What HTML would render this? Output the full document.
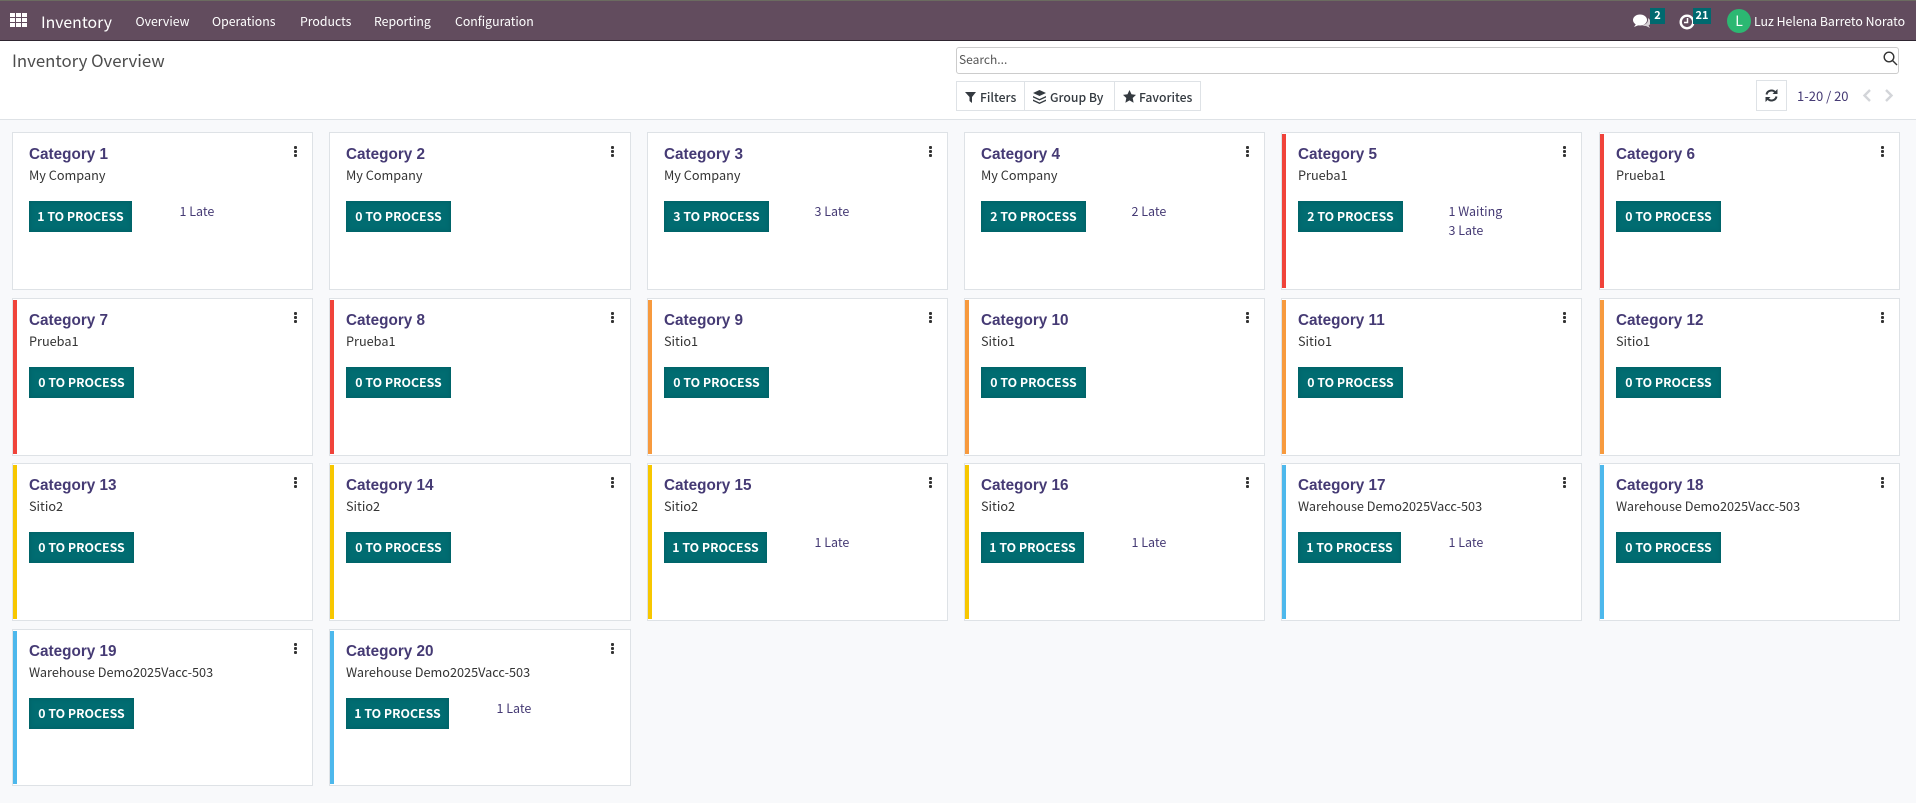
<!DOCTYPE html>
<html><head><meta charset="utf-8"><style>
*{box-sizing:border-box}
html,body{margin:0;padding:0}
body{width:1916px;height:803px;overflow:hidden;background:#f8f9fb;position:relative;font-family:"Noto Sans CJK SC","Liberation Sans",sans-serif;color:#333}
.a{position:absolute;white-space:nowrap}
#nav{left:0;top:0;width:1916px;height:41px;background:#624c5e;border-top:1px solid #6b6b60;border-bottom:1px solid #2e2530}
.n{top:11px;font-size:12.300px;line-height:20px;color:#fff}
#cp{left:0;top:41px;width:1916px;height:79px;background:#fff;border-bottom:1px solid #dee2e6}
.f{top:81px;height:30px;border:1px solid #dee2e6;background:#fff;font-size:12.200px;line-height:30px;color:#343a40;font-weight:500}
.c{width:301px;height:158px;background:#fff;border:1px solid #dee2e6}
.s{position:absolute;left:0;top:1px;bottom:1px;width:4px}
.t{position:absolute;left:16px;top:11px;font-family:"Liberation Sans",sans-serif;font-size:15.300px;line-height:22px;font-weight:700;color:#453a74;white-space:nowrap}
.u{position:absolute;left:16px;top:33px;font-size:12.700px;line-height:18px;color:#333;white-space:nowrap}
.b{position:absolute;left:16px;top:68px;height:31px;width:105px;background:#016c71;box-shadow:inset 0 0 5px #005d62;color:#fff;font-size:12.300px;font-weight:700;line-height:30px;text-align:center;white-space:nowrap}
.b.w{width:103px}
.x{position:absolute;left:166.500px;top:68px;font-size:12.500px;line-height:19px;color:#453a74;white-space:nowrap}
.d{position:absolute;left:281px;top:13px;width:3px;height:11px;background:radial-gradient(circle at 1.5px 1.5px,#333 1.5px,transparent 1.6px) 0 0/3px 4px}
</style></head><body>
<div class="a" id="nav"></div>
<svg class="a" style="left:10px;top:13px" width="17" height="14" viewBox="0 0 17 14" fill="#fff"><rect width="5" height="4"/><rect x="6" width="5" height="4"/><rect x="12" width="5" height="4"/><rect y="5" width="5" height="4"/><rect x="6" y="5" width="5" height="4"/><rect x="12" y="5" width="5" height="4"/><rect y="10" width="5" height="4"/><rect x="6" y="10" width="5" height="4"/><rect x="12" y="10" width="5" height="4"/></svg>
<div class="a n" style="left:41px;top:10px;font-size:15.800px;line-height:24px">Inventory</div>
<div class="a n" style="left:135.500px">Overview</div>
<div class="a n" style="left:212px">Operations</div>
<div class="a n" style="left:300px">Products</div>
<div class="a n" style="left:374px">Reporting</div>
<div class="a n" style="left:455px">Configuration</div>
<svg class="a" style="left:1633px;top:13px" width="18" height="16" viewBox="0 0 18 16" fill="#fff"><ellipse cx="7" cy="7" rx="7" ry="5.500"/><path d="M3 11l-2 3 5-2z"/><path d="M15 5c2 1.500 3 3 2.500 5-.4 1.500-1.200 2-2 2.500l1.500 2.500-4-2c-1.500 0-3-.3-4-1 3 0 6-2 6-5z" opacity=".75"/></svg>
<div class="a" style="left:1650px;top:8px;width:15px;height:16px;background:#00696f;color:#fff;font-size:11px;font-weight:700;line-height:15px;text-align:center">2</div>
<svg class="a" style="left:1679px;top:14px" width="16" height="16" viewBox="0 0 16 16" fill="none" stroke="#fff"><circle cx="8" cy="8" r="6.300" stroke-width="2.400"/><path d="M8.500 4v4.500H5" stroke-width="1.500"/></svg>
<div class="a" style="left:1693px;top:8px;width:18px;height:16px;background:#00696f;color:#fff;font-size:11px;font-weight:700;line-height:15px;text-align:center">21</div>
<div class="a" style="left:1727px;top:9px;width:24px;height:24px;border-radius:50%;background:#2cb872;color:#fff;font-size:14px;line-height:24px;text-align:center">L</div>
<div class="a n" style="left:1754px">Luz Helena Barreto Norato</div>

<div class="a" id="cp"></div>
<div class="a" style="left:12px;top:48px;font-size:16.800px;line-height:24px;color:#4c4c4c">Inventory Overview</div>
<div class="a" style="left:956px;top:47px;width:943px;height:27px;border:1px solid #ccc;border-radius:3px;background:#fff;font-size:12px;line-height:23px;padding-left:2px;color:#555">Search...</div>
<svg class="a" style="left:1883px;top:51px" width="15" height="15" viewBox="0 0 15 15" fill="none" stroke="#333" stroke-width="1.400"><circle cx="6" cy="6" r="4.800"/><path d="M9.500 9.500l4.500 4.500"/></svg>
<div class="a f" style="left:956px;width:69px;padding-left:23px">Filters</div>
<svg class="a" style="left:965px;top:91px" width="12" height="12" viewBox="0 0 12 12" fill="#343a40"><path d="M0 1h11L7 6v6L4.500 10V6z"/></svg>
<div class="a f" style="left:1024px;width:91px;padding-left:25px">Group By</div>
<svg class="a" style="left:1033px;top:90px" width="13" height="14" viewBox="0 0 13 14" fill="#343a40"><path d="M6.500 0L13 3 6.500 6 0 3z"/><path d="M0 6l6.500 3L13 6v1.500L6.500 10.500 0 7.500z"/><path d="M0 9.500l6.500 3 6.500-3V11l-6.500 3L0 11z"/></svg>
<div class="a f" style="left:1114px;width:87px;padding-left:24px">Favorites</div>
<svg class="a" style="left:1123px;top:90px" width="13" height="13" viewBox="0 0 13 13" fill="#343a40"><path d="M6.500 0l2 4.300 4.500.6-3.300 3.100.9 4.700-4.100-2.300-4.100 2.300.9-4.700L0 4.900l4.500-.6z"/></svg>
<div class="a" style="left:1756px;top:80px;width:31px;height:31px;border:1px solid #dee2e6;background:#fff"></div>
<svg class="a" style="left:1765px;top:89px" width="13" height="13" viewBox="0 0 13 13" fill="none" stroke="#343a40" stroke-width="2"><path d="M1.500 5.500a5 5 0 0 1 9-1.800M11.500 7.500a5 5 0 0 1-9 1.800"/><path d="M12.500 0v5h-5z" fill="#343a40" stroke="none"/><path d="M.5 13V8h5z" fill="#343a40" stroke="none"/></svg>
<div class="a" style="left:1797px;top:86px;font-size:13px;line-height:20px;color:#453a74">1-20 / 20</div>
<svg class="a" style="left:1862px;top:89px" width="36" height="13" viewBox="0 0 36 13" fill="none" stroke="#d3d5d9" stroke-width="2.400"><path d="M8 1L2.500 6.500 8 12M24 1l5.500 5.500L24 12"/></svg>

<div class="a c" style="left:12px;top:132px"><div class="t">Category 1</div><div class="u">My Company</div><div class="b w">1 TO PROCESS</div><div class="x">1 Late</div><div class="d"></div></div>
<div class="a c" style="left:329px;top:132px;width:302px"><div class="t">Category 2</div><div class="u">My Company</div><div class="b">0 TO PROCESS</div><div class="d"></div></div>
<div class="a c" style="left:647px;top:132px"><div class="t">Category 3</div><div class="u">My Company</div><div class="b">3 TO PROCESS</div><div class="x">3 Late</div><div class="d"></div></div>
<div class="a c" style="left:964px;top:132px"><div class="t">Category 4</div><div class="u">My Company</div><div class="b">2 TO PROCESS</div><div class="x">2 Late</div><div class="d"></div></div>
<div class="a c" style="left:1281px;top:132px"><div class="s" style="background:#f0433a"></div><div class="t">Category 5</div><div class="u">Prueba1</div><div class="b">2 TO PROCESS</div><div class="x">1 Waiting<br>3 Late</div><div class="d"></div></div>
<div class="a c" style="left:1599px;top:132px"><div class="s" style="background:#f0433a"></div><div class="t">Category 6</div><div class="u">Prueba1</div><div class="b">0 TO PROCESS</div><div class="d"></div></div>

<div class="a c" style="left:12px;top:298px"><div class="s" style="background:#f0433a"></div><div class="t">Category 7</div><div class="u">Prueba1</div><div class="b">0 TO PROCESS</div><div class="d"></div></div>
<div class="a c" style="left:329px;top:298px;width:302px"><div class="s" style="background:#f0433a"></div><div class="t">Category 8</div><div class="u">Prueba1</div><div class="b">0 TO PROCESS</div><div class="d"></div></div>
<div class="a c" style="left:647px;top:298px"><div class="s" style="background:#f79a3e"></div><div class="t">Category 9</div><div class="u">Sitio1</div><div class="b">0 TO PROCESS</div><div class="d"></div></div>
<div class="a c" style="left:964px;top:298px"><div class="s" style="background:#f79a3e"></div><div class="t">Category 10</div><div class="u">Sitio1</div><div class="b">0 TO PROCESS</div><div class="d"></div></div>
<div class="a c" style="left:1281px;top:298px"><div class="s" style="background:#f79a3e"></div><div class="t">Category 11</div><div class="u">Sitio1</div><div class="b">0 TO PROCESS</div><div class="d"></div></div>
<div class="a c" style="left:1599px;top:298px"><div class="s" style="background:#f79a3e"></div><div class="t">Category 12</div><div class="u">Sitio1</div><div class="b">0 TO PROCESS</div><div class="d"></div></div>

<div class="a c" style="left:12px;top:463px"><div class="s" style="background:#f7c700"></div><div class="t">Category 13</div><div class="u">Sitio2</div><div class="b">0 TO PROCESS</div><div class="d"></div></div>
<div class="a c" style="left:329px;top:463px;width:302px"><div class="s" style="background:#f7c700"></div><div class="t">Category 14</div><div class="u">Sitio2</div><div class="b">0 TO PROCESS</div><div class="d"></div></div>
<div class="a c" style="left:647px;top:463px"><div class="s" style="background:#f7c700"></div><div class="t">Category 15</div><div class="u">Sitio2</div><div class="b w">1 TO PROCESS</div><div class="x">1 Late</div><div class="d"></div></div>
<div class="a c" style="left:964px;top:463px"><div class="s" style="background:#f7c700"></div><div class="t">Category 16</div><div class="u">Sitio2</div><div class="b w">1 TO PROCESS</div><div class="x">1 Late</div><div class="d"></div></div>
<div class="a c" style="left:1281px;top:463px"><div class="s" style="background:#4db8ec"></div><div class="t">Category 17</div><div class="u">Warehouse Demo2025Vacc-503</div><div class="b w">1 TO PROCESS</div><div class="x">1 Late</div><div class="d"></div></div>
<div class="a c" style="left:1599px;top:463px"><div class="s" style="background:#4db8ec"></div><div class="t">Category 18</div><div class="u">Warehouse Demo2025Vacc-503</div><div class="b">0 TO PROCESS</div><div class="d"></div></div>

<div class="a c" style="left:12px;top:629px;height:157px"><div class="s" style="background:#4db8ec"></div><div class="t">Category 19</div><div class="u">Warehouse Demo2025Vacc-503</div><div class="b">0 TO PROCESS</div><div class="d"></div></div>
<div class="a c" style="left:329px;top:629px;height:157px;width:302px"><div class="s" style="background:#4db8ec"></div><div class="t">Category 20</div><div class="u">Warehouse Demo2025Vacc-503</div><div class="b w">1 TO PROCESS</div><div class="x">1 Late</div><div class="d"></div></div>
</body></html>
